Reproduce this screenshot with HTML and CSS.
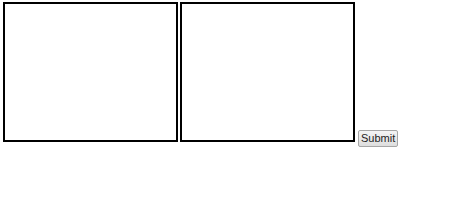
FILE: index.html
```html
<!DOCTYPE html>
<html lang="en">
    <head>
        <meta charset="UTF-8">
        <meta name="viewport" content="width=device-width, initial-scale=1.0">
        <link rel="stylesheet" href="styles.css">
        <title>Submit</title>
    </head>
    <body>
        <div id="row">
            <div class="pane" id="left-pane"></div>
            <div class="pane" id="right-pane"></div>
            <button id="submit">Submit</button>
        </div>
    </body>
</html>
```

FILE: styles.css
```css
 body {
     margin: 2px 3px;
     background-color: white;
     font-family: 'Liberation Sans', Arial, sans-serif;
 }

 /*button text sits on the bottom edge of the panes*/
 #row {
     display: flex;
     flex-direction: row;
     align-items: baseline;
     gap: 2px;
 }

 .pane {
     flex: none;
     width: 171px;
     height: 136px;
     border: 2px solid black;
     background-color: white;
 }

 #submit {
     flex: none;
     box-sizing: border-box;
     height: 17px;
     margin-left: 1px;
     padding: 0 2px;
     font-family: 'Liberation Sans', Arial, sans-serif;
     font-size: 11px;
     line-height: 15px;
     color: #222;
     border: 1px solid #a6a6a6;
     border-radius: 2px;
     background: linear-gradient(#f4f4f4, #dedede);
 }
```
